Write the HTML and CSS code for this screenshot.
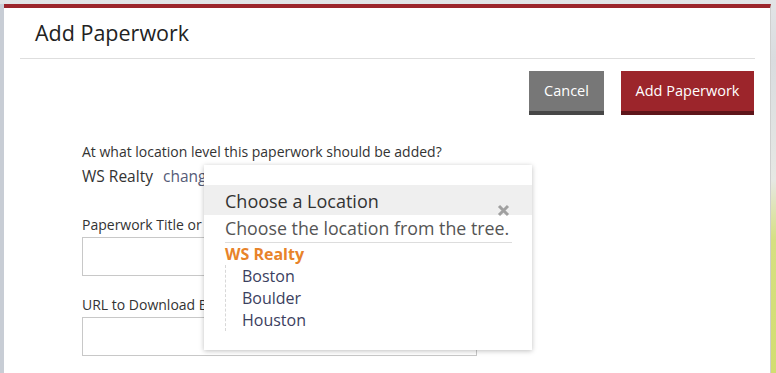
FILE: index.html
```html
<!DOCTYPE html>
<html>
<head>
<meta charset="utf-8">
<link rel="stylesheet" href="styles.css">
</head>
<body>
<div class="modal">
  <div class="modal-header">
    <h1 class="modal-title">Add Paperwork</h1>
  </div>
  <div class="actions">
    <button class="btn btn-cancel">Cancel</button>
    <button class="btn btn-primary">Add Paperwork</button>
  </div>
  <div class="form">
    <p class="question">At what location level this paperwork should be added?</p>
    <p class="location">WS Realty <a class="change">change</a></p>
    <label class="label">Paperwork Title or Description</label>
    <div class="input"></div>
    <label class="label label-url">URL to Download Blank Form</label>
    <div class="input"></div>
  </div>
  <div class="popup">
    <div class="popup-head">Choose a Location</div>
    <svg class="popup-close" width="13" height="13" viewBox="0 0 13 13"><path d="M2 2 L11 11 M11 2 L2 11" stroke="#a0a0a0" stroke-width="3" stroke-linecap="butt"/></svg>
    <div class="popup-sub">Choose the location from the tree.</div>
    <div class="tree-root">WS Realty</div>
    <ul class="tree">
      <li>Boston</li>
      <li>Boulder</li>
      <li>Houston</li>
    </ul>
  </div>
</div>
</body>
</html>
```
FILE: styles.css
```css
html, body {
  margin: 0;
  height: 100%;
}
body {
  font-family: "Open Sans", "Noto Sans", sans-serif;
  background:
    linear-gradient(180deg, #e2e4e6 0px, #d9dcdf 60px, #e6e8e4 180px, #d6e082 240px, #d2de70 373px);
  padding: 4px 0 0 4px;
  box-sizing: border-box;
  overflow: hidden;
  position: relative;
}
body::before {
  content: "";
  position: absolute;
  left: 0;
  top: 4px;
  bottom: 0;
  width: 4px;
  background: #c8cdd5;
}
.modal {
  position: relative;
  width: 767px;
  height: 369px;
  box-sizing: border-box;
  background: #fff;
  border-top: 4px solid #9c252b;
  border-right: 1px solid #cfcfcf;
}
.modal-header {
  height: 50px;
  margin: 0 15px 0 16px;
  border-bottom: 1px solid #dedede;
  box-sizing: content-box;
}
.modal-title {
  margin: 0;
  padding: 10px 0 0 15px;
  font-size: 21.5px;
  font-weight: 400;
  line-height: 29px;
  color: #222;
}
.actions {
  display: flex;
  justify-content: flex-end;
  gap: 17px;
  margin-top: 12px;
  padding-right: 16px;
}
.btn {
  height: 44px;
  border: none;
  border-bottom: 4px solid;
  font-family: "Open Sans", "Noto Sans", sans-serif;
  font-size: 14.5px;
  color: #fff;
  padding: 0;
  line-height: 40px;
}
.btn-cancel {
  width: 75px;
  background: #777;
  border-bottom-color: #474747;
}
.btn-primary {
  width: 133px;
  background: #9c252b;
  border-bottom-color: #5e151a;
}
.form {
  padding: 28px 0 0 78px;
}
.question {
  margin: 0;
  font-size: 14px;
  line-height: 18px;
  color: #333;
}
.location {
  margin: 5px 0 0;
  font-size: 15.5px;
  line-height: 20px;
  color: #333;
}
.change {
  color: #555b77;
  margin-left: 6px;
}
.label {
  display: block;
  margin-top: 30px;
  font-size: 14px;
  line-height: 18px;
  color: #333;
}
.label-url {
  margin-top: 20px;
}
.input {
  width: 395px;
  height: 39px;
  box-sizing: border-box;
  border: 1px solid #c8c8c8;
  margin-top: 3px;
}
.popup {
  position: absolute;
  left: 200px;
  top: 157px;
  width: 328px;
  height: 185px;
  background: #fff;
  box-shadow: 0 1px 5px rgba(0, 0, 0, 0.25);
  padding-top: 20px;
  box-sizing: border-box;
}
.popup-head {
  height: 30px;
  background: #efefef;
  padding-left: 21px;
  font-size: 18px;
  line-height: 33px;
  color: #333;
}
.popup-close {
  position: absolute;
  left: 293px;
  top: 39px;
}
.popup-sub {
  margin: 0 20px 0 21px;
  font-size: 17.8px;
  line-height: 25px;
  padding-top: 1px;
  color: #555;
  white-space: nowrap;
  border-bottom: 1px solid #ddd;
  padding-bottom: 1px;
}
.tree-root {
  padding-left: 21px;
  font-size: 16px;
  font-weight: 700;
  line-height: 22px;
  color: #e8832a;
}
.tree {
  list-style: none;
  margin: 0 0 0 21px;
  padding: 0 0 0 16px;
  border-left: 1px dashed #d8d8d8;
}
.tree li {
  font-size: 16px;
  line-height: 22px;
  color: #3b4060;
}
```
